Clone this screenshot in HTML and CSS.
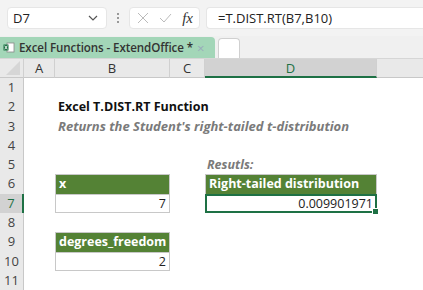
FILE: index.html
```html
<!DOCTYPE html>
<html lang="en">
<head>
    <meta charset="UTF-8">
    <title>Excel T.DIST.RT</title>
    <link rel="stylesheet" href="styles.css">
</head>
<body>
    <div class="toolbar">
        <div class="namebox">
            <span>D7</span>
            <svg width="10" height="6" viewBox="0 0 10 6"><path d="M1 1l4 4 4-4" fill="none" stroke="#555" stroke-width="1.2"/></svg>
        </div>
        <div class="dots"><i></i><i></i><i></i></div>
        <div class="fxbox">
            <svg width="12" height="12" viewBox="0 0 12 12"><path d="M1 1l10 10M11 1L1 11" stroke="#bbb" stroke-width="1"/></svg>
            <svg width="13" height="10" viewBox="0 0 13 10"><path d="M1 5l4 4 7-8" fill="none" stroke="#bbb" stroke-width="1"/></svg>
            <span class="fx">fx</span>
        </div>
        <div class="formula">=T.DIST.RT(B7,B10)</div>
    </div>
    <div class="tabs">
        <div class="tab active">
            <svg width="12" height="11" viewBox="0 0 12 11"><rect x="4" y="1" width="7" height="9" fill="#fff" stroke="#888" stroke-width="0.8"/><rect x="0.5" y="2.5" width="5" height="6" fill="#1e7145"/><path d="M1.7 3.7l2.6 3.6M4.3 3.7L1.7 7.3" stroke="#fff" stroke-width="0.9"/></svg>
            <span>Excel Functions - ExtendOffice *</span>
            <span class="close">×</span>
        </div>
        <div class="tab add"></div>
    </div>
    <div class="sheet">
        <div class="corner"><svg width="14" height="14" viewBox="0 0 14 14"><path d="M14 0v14H0z" fill="#d6d6d6"/></svg></div>
        <div class="colhead ca">A</div>
        <div class="colhead cb">B</div>
        <div class="colhead cc">C</div>
        <div class="colhead cd current">D</div>
        <div class="colhead ce last"></div>

        <div class="rowhead r1">1</div>
        <div class="rowhead r2">2</div>
        <div class="rowhead r3">3</div>
        <div class="rowhead r4">4</div>
        <div class="rowhead r5">5</div>
        <div class="rowhead r6">6</div>
        <div class="rowhead r7 current">7</div>
        <div class="rowhead r8">8</div>
        <div class="rowhead r9">9</div>
        <div class="rowhead r10">10</div>
        <div class="rowhead r11">11</div>

        <div class="cell title r2">Excel T.DIST.RT Function</div>
        <div class="cell subtitle r3">Returns the Student's right-tailed t-distribution</div>
        <div class="cell note r5">Resutls:</div>

        <div class="cell head colB r6">x</div>
        <div class="cell value colB r7">7</div>
        <div class="cell head colB r9">degrees_freedom</div>
        <div class="cell value colB r10">2</div>

        <div class="cell head colD r6">Right-tailed distribution</div>
        <div class="cell value colD r7 selected">0.009901971<span class="handle"></span></div>
    </div>
</body>
</html>
```

FILE: styles.css
```css
body {
    margin: 0;
    width: 423px;
    height: 290px;
    overflow: hidden;
    background: #fff;
    font-family: "Open Sans", "Liberation Sans", sans-serif;
    color: #222;
}
.toolbar {
    height: 36px;
    background: #f3f3f3;
    display: flex;
    align-items: center;
    padding-left: 7px;
    box-sizing: border-box;
}
.namebox {
    width: 100px;
    height: 22px;
    background: #fff;
    border: 1px solid #e6e6e6;
    border-radius: 4px;
    box-sizing: border-box;
    display: flex;
    align-items: center;
    justify-content: space-between;
    padding: 0 8px 0 5px;
    font-size: 13px;
}
.dots {
    width: 22px;
    display: flex;
    flex-direction: column;
    align-items: center;
    gap: 2px;
}
.dots i {
    width: 2px;
    height: 2px;
    background: #999;
}
.fxbox {
    width: 71px;
    height: 22px;
    background: #fff;
    border: 1px solid #e6e6e6;
    border-radius: 4px;
    box-sizing: border-box;
    display: flex;
    align-items: center;
    justify-content: space-between;
    padding: 0 6px 0 7px;
}
.fx {
    font-family: "Liberation Serif", serif;
    font-style: italic;
    font-size: 15px;
    color: #333;
}
.formula {
    flex: 1;
    height: 22px;
    margin-left: 6px;
    background: #fff;
    border: 1px solid #e6e6e6;
    border-right: 0;
    border-radius: 4px 0 0 4px;
    box-sizing: border-box;
    padding-left: 11px;
    font-size: 13px;
    line-height: 20px;
}
.tabs {
    height: 22px;
    background: #f0f0f0;
    display: flex;
    align-items: flex-end;
    border-bottom: 1px solid #d6d6d6;
}
.tab {
    height: 21px;
    box-sizing: border-box;
    display: flex;
    align-items: center;
    white-space: nowrap;
}
.tab.active {
    width: 215px;
    background: #a3d6b8;
    border-radius: 0 4px 0 0;
    padding-left: 3px;
    gap: 4px;
    font-size: 11.6px;
    font-weight: 600;
    letter-spacing: -0.1px;
    color: #333;
}
.tab .close {
    font-weight: 400;
    color: #9ab;
    font-size: 13px;
}
.tab.add {
    width: 22px;
    height: 20px;
    margin-left: 3px;
    background: #fff;
    border: 1px solid #d0d0d0;
    border-bottom: 0;
    border-radius: 4px 4px 0 0;
}
.sheet {
    display: grid;
    grid-template-columns: 24px 31px 115px 35px 172px 1fr;
    grid-template-rows: 19px repeat(11, 19.3px);
    font-family: "Open Sans", "Liberation Sans", sans-serif;
    font-size: 12.5px;
}
.corner {
    grid-row: 1;
    grid-column: 1;
    background: #e9e9e9;
    border-right: 1px solid #d0d0d0;
    border-bottom: 1px solid #c8c8c8;
    display: flex;
    align-items: flex-end;
    justify-content: flex-end;
    padding: 0 3px 2px 0;
}
.colhead {
    grid-row: 1;
    background: #e9e9e9;
    border-right: 1px solid #d0d0d0;
    border-bottom: 1px solid #c8c8c8;
    text-align: center;
    line-height: 18px;
    color: #333;
    font-size: 13px;
}
.ca { grid-column: 2; }
.cb { grid-column: 3; }
.cc { grid-column: 4; }
.cd { grid-column: 5; }
.ce { grid-column: 6; }
.colhead.current {
    background: #d2d2d2;
    color: #1e7145;
    border-bottom: 2px solid #1e7145;
}
.colhead.last {
    border-right: 0;
}
.rowhead {
    grid-column: 1;
    background: #e9e9e9;
    border-right: 1px solid #c8c8c8;
    text-align: center;
    line-height: 19px;
    color: #444;
    font-size: 13px;
}
.rowhead.current {
    background: #d2d2d2;
    color: #1e7145;
    border-right: 2px solid #1e7145;
}
.r1 { grid-row: 2; }
.r2 { grid-row: 3; }
.r3 { grid-row: 4; }
.r4 { grid-row: 5; }
.r5 { grid-row: 6; }
.r6 { grid-row: 7; }
.r7 { grid-row: 8; }
.r8 { grid-row: 9; }
.r9 { grid-row: 10; }
.r10 { grid-row: 11; }
.r11 { grid-row: 12; }
.cell {
    white-space: nowrap;
    line-height: 19px;
    box-sizing: border-box;
}
.title {
    grid-column: 3;
    padding-left: 3px;
    font-weight: 700;
    font-size: 12.5px;
    color: #111;
}
.subtitle {
    grid-column: 3;
    padding-left: 3px;
    font-weight: 700;
    font-style: italic;
    font-size: 13px;
    color: #7a7a7a;
}
.note {
    grid-column: 5;
    padding-left: 2px;
    font-weight: 700;
    font-style: italic;
    color: #7a7a7a;
}
.colB { grid-column: 3; }
.colD { grid-column: 5; }
.head {
    background: #548235;
    color: #fff;
    font-weight: 700;
    padding-left: 3px;
    border: 1px solid #c8c8c8;
    border-bottom: 0;
    line-height: 18px;
}
.value {
    border: 1px solid #c8c8c8;
    text-align: right;
    padding-right: 3px;
    line-height: 17px;
    position: relative;
}
.value.selected {
    border: 2px solid #1e7145;
    line-height: 15px;
    padding-right: 2px;
}
.handle {
    position: absolute;
    right: -4px;
    bottom: -4px;
    width: 5px;
    height: 5px;
    background: #1e7145;
    border: 1px solid #fff;
}
```
